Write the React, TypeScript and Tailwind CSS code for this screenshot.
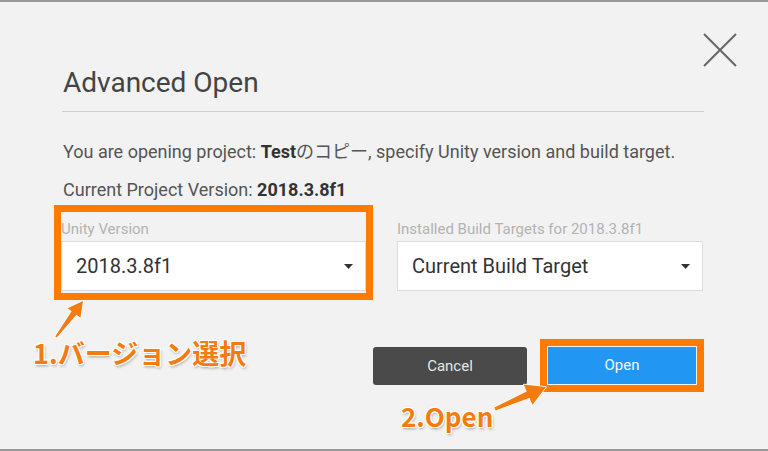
import React from "react";

function Caret() {
  return (
    <svg width="9" height="5" viewBox="0 0 9 5">
      <polygon points="0,0 9,0 4.5,5" fill="#333" />
    </svg>
  );
}

function Select({ value }: { value: string }) {
  return (
    <div className="flex h-[50px] w-full items-center justify-between border border-[#dcdcdc] bg-white pl-[14px] pr-[12px]">
      <span className="text-[20px] leading-none text-[#333]">{value}</span>
      <Caret />
    </div>
  );
}

const annotation =
  "font-['Noto_Sans_CJK_JP',sans-serif] font-bold text-[#f47b10] [text-shadow:0_0_2px_#fff,0_0_2px_#fff,1px_1px_0_#fff,-1px_-1px_0_#fff,1px_-1px_0_#fff,-1px_1px_0_#fff,1px_2px_3px_rgba(0,0,0,0.35)]";

export default function App() {
  return (
    <div className="relative h-[451px] w-[768px] overflow-hidden border-t-2 border-b-2 border-[#999] bg-[#f2f2f2] font-['Roboto','Noto_Sans_CJK_JP',sans-serif]">
      {/* close */}
      <div className="flex justify-end pr-[31px] pt-[31px]">
        <button className="h-[34px] w-[34px]">
          <svg width="34" height="34" viewBox="0 0 34 34">
            <path d="M1 1 L33 33 M33 1 L1 33" stroke="#666" strokeWidth="2" />
          </svg>
        </button>
      </div>

      <div className="pl-[62px] pr-[64px]">
        <h1 className="mt-[2px] pl-px text-[28px] leading-[28px] text-[#444]">
          Advanced Open
        </h1>
        <div className="mt-[14px] h-px bg-[#cfcfcf]" />

        <p className="mt-[30px] pl-px text-[18px] leading-[20px] text-[#555]">
          You are opening project: <span className="font-bold text-[#333]">Test</span>
          のコピー, specify Unity version and build target.
        </p>
        <p className="mt-[18px] pl-px text-[18px] leading-[20px] text-[#555]">
          Current Project Version:{" "}
          <span className="font-bold text-[#333]">2018.3.8f1</span>
        </p>
      </div>

      <div className="mt-[12px] flex gap-[31px] pl-[61px]">
        <div className="w-[305px] rounded-none pb-[2px] pt-[8px] outline-[7px] outline-[#ff7b00]">
          <div className="mb-[3px] text-[15px] leading-[18px] text-[#b3b3b3]">
            Unity Version
          </div>
          <Select value="2018.3.8f1" />
        </div>
        <div className="w-[306px] pb-[2px] pt-[8px]">
          <div className="mb-[3px] text-[15px] leading-[18px] text-[#b3b3b3]">
            Installed Build Targets for 2018.3.8f1
          </div>
          <Select value="Current Build Target" />
        </div>
      </div>

      <div className="mt-[54px] flex justify-end gap-[21px] pr-[72px]">
        <button className="h-[38px] w-[154px] rounded-[3px] bg-[#4a4a4a] text-[15px] text-[#e6e6e6]">
          Cancel
        </button>
        <button className="h-[37px] w-[148px] rounded-none bg-[#2196f3] text-[15px] text-[#f4f9ff] outline-[7px] outline-offset-[1px] outline-[#ff7b00]">
          Open
        </button>
      </div>

      {/* annotation arrows */}
      <svg
        className="pointer-events-none absolute left-0 top-0"
        width="768"
        height="451"
        viewBox="0 2 768 451"
      >
        <polygon
          points="55.2,336.4 71.6,311.2 67.6,308.2 83,301 80.4,317.8 76.4,314.8 56.8,337.6"
          fill="#f47b10"
          stroke="#fff"
          strokeWidth="1.5"
          strokeLinejoin="round"
          style={{ paintOrder: "stroke" }}
        />
        <polygon
          points="494.4,407.6 526.7,391.5 523.7,384.6 546,387 532.5,404.8 529.5,397.9 495.6,410.4"
          fill="#f47b10"
          stroke="#fff"
          strokeWidth="1.5"
          strokeLinejoin="round"
          style={{ paintOrder: "stroke" }}
        />
      </svg>

      <div className={`absolute left-[33px] top-[334px] text-[27px] leading-[34px] ${annotation}`}>
        1.バージョン選択
      </div>
      <div className={`absolute left-[401px] top-[398px] text-[26px] leading-[32px] ${annotation}`}>
        2.Open
      </div>
    </div>
  );
}
